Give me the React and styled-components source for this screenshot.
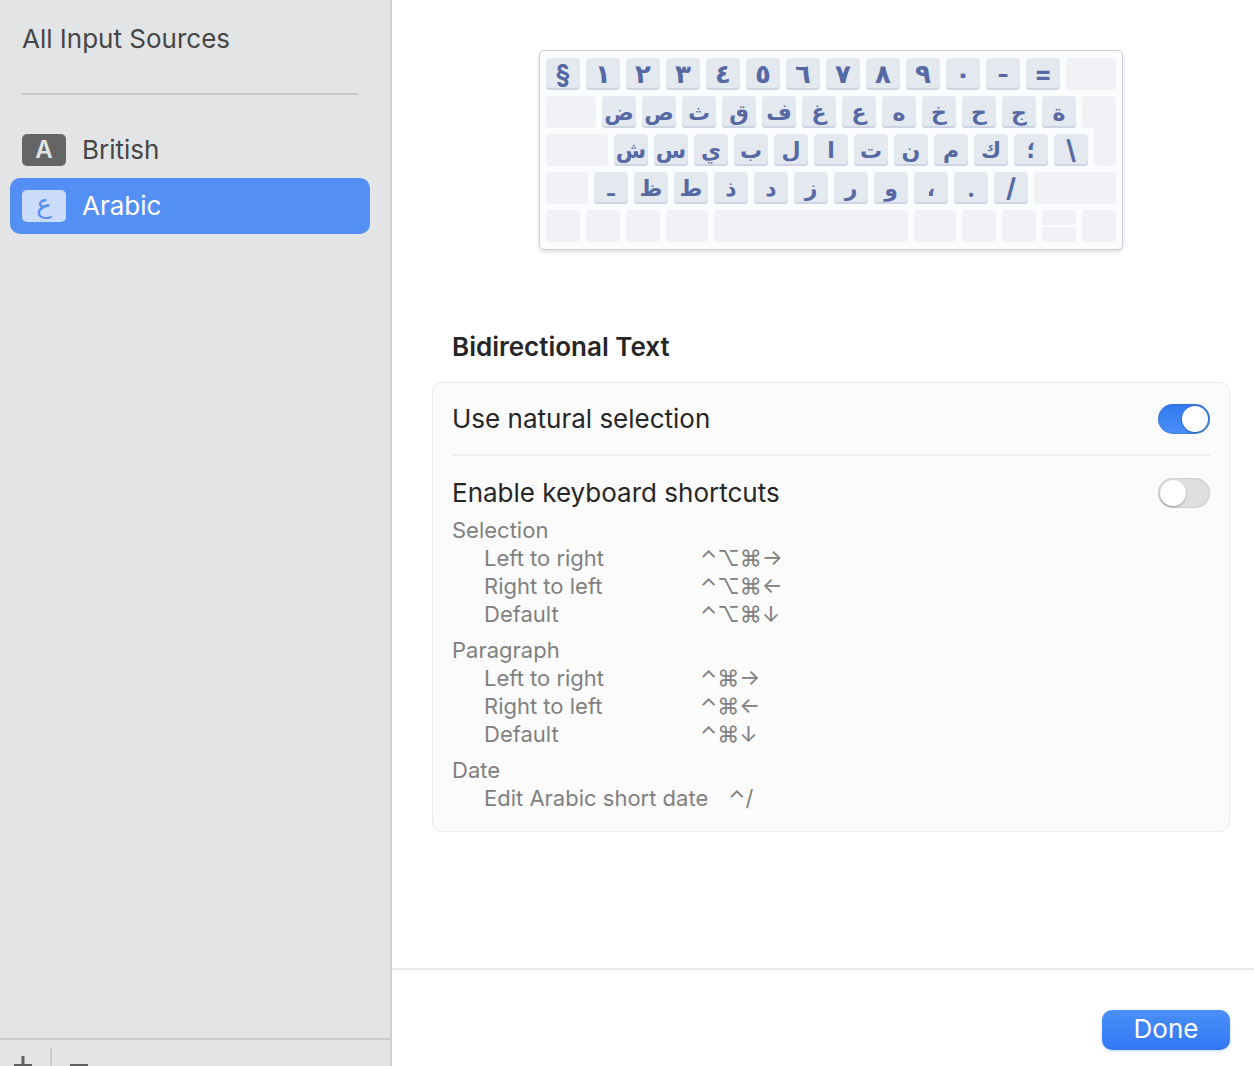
import { useState } from 'react';
import styled, { createGlobalStyle } from 'styled-components';

const sources = [
  { id: 'british', name: 'British', symbol: 'A' },
  { id: 'arabic', name: 'Arabic', symbol: 'ع' },
];

const digitRow = ['§', '١', '٢', '٣', '٤', '٥', '٦', '٧', '٨', '٩', '٠', '-', '='];
const topRow = ['ض', 'ص', 'ث', 'ق', 'ف', 'غ', 'ع', 'ه', 'خ', 'ح', 'ج', 'ة'];
const homeRow = ['ش', 'س', 'ي', 'ب', 'ل', 'ا', 'ت', 'ن', 'م', 'ك', '؛', '\\'];
const bottomRow = ['ـ', 'ظ', 'ط', 'ذ', 'د', 'ز', 'ر', 'و', '،', '.', '/'];

const shortcuts = [
  {
    title: 'Selection',
    items: [
      ['Left to right', '⌃⌥⌘→'],
      ['Right to left', '⌃⌥⌘←'],
      ['Default', '⌃⌥⌘↓'],
    ],
  },
  {
    title: 'Paragraph',
    items: [
      ['Left to right', '⌃⌘→'],
      ['Right to left', '⌃⌘←'],
      ['Default', '⌃⌘↓'],
    ],
  },
  {
    title: 'Date',
    items: [['Edit Arabic short date', '⌃/']],
  },
];

const isLarge = (char) => /[§=\-\\/.\u0660-\u0669]/.test(char);

const Keys = ({ chars }) =>
  chars.map((char) => (
    <Key key={char} $large={isLarge(char)}>
      {char}
    </Key>
  ));

const Keyboard = () => (
  <KeyboardFrame>
    <KeyRow>
      <Keys chars={digitRow} />
      <BlankKey $grow />
    </KeyRow>
    <KeyRow>
      <BlankKey $width={50} />
      <Keys chars={topRow} />
      <ReturnTop />
    </KeyRow>
    <KeyRow>
      <BlankKey $width={62} />
      <Keys chars={homeRow} />
      <ReturnBottom />
    </KeyRow>
    <KeyRow>
      <BlankKey $width={42} />
      <Keys chars={bottomRow} />
      <BlankKey $grow />
    </KeyRow>
    <KeyRow>
      <BlankKey />
      <BlankKey />
      <BlankKey />
      <BlankKey $width={42} />
      <BlankKey $grow />
      <BlankKey $width={42} />
      <BlankKey />
      <BlankKey />
      <ArrowPair>
        <HalfKey />
        <HalfKey />
      </ArrowPair>
      <BlankKey />
    </KeyRow>
  </KeyboardFrame>
);

const App = () => {
  const [selected, setSelected] = useState('arabic');
  const [natural, setNatural] = useState(true);
  const [enabled, setEnabled] = useState(false);

  return (
    <>
      <GlobalStyle />
      <Window>
        <Sidebar>
          <SidebarTitle>All Input Sources</SidebarTitle>
          <SourceList>
            {sources.map((source) => (
              <SourceButton
                key={source.id}
                type="button"
                $active={selected === source.id}
                onClick={() => setSelected(source.id)}
              >
                <Badge $active={selected === source.id}>{source.symbol}</Badge>
                {source.name}
              </SourceButton>
            ))}
          </SourceList>
          <SidebarFooter>
            <ToolButton type="button" aria-label="Add">
              <svg width="18" height="18" viewBox="0 0 18 18" stroke="currentColor" strokeWidth="3">
                <path d="M9 0v18M0 9.5h18" />
              </svg>
            </ToolButton>
            <ToolDivider />
            <ToolButton type="button" aria-label="Remove">
              <svg width="18" height="18" viewBox="0 0 18 18" stroke="currentColor" strokeWidth="3">
                <path d="M0 9.5h18" />
              </svg>
            </ToolButton>
          </SidebarFooter>
        </Sidebar>

        <Main>
          <Content>
            <Keyboard />
            <SectionTitle>Bidirectional Text</SectionTitle>
            <Card>
              <SettingRow>
                <label htmlFor="natural">Use natural selection</label>
                <Switch
                  id="natural"
                  type="checkbox"
                  checked={natural}
                  onChange={(e) => setNatural(e.target.checked)}
                />
              </SettingRow>
              <Divider />
              <SettingRow>
                <label htmlFor="shortcuts">Enable keyboard shortcuts</label>
                <Switch
                  id="shortcuts"
                  type="checkbox"
                  checked={enabled}
                  onChange={(e) => setEnabled(e.target.checked)}
                />
              </SettingRow>
              <Shortcuts>
                {shortcuts.map((group) => (
                  <div key={group.title}>
                    <div>{group.title}</div>
                    {group.items.map(([label, combo]) => (
                      <ShortcutRow key={label}>
                        <ShortcutLabel>{label}</ShortcutLabel>
                        <span>{combo}</span>
                      </ShortcutRow>
                    ))}
                  </div>
                ))}
              </Shortcuts>
            </Card>
          </Content>
          <Footer>
            <DoneButton type="button">Done</DoneButton>
          </Footer>
        </Main>
      </Window>
    </>
  );
};

const GlobalStyle = createGlobalStyle`
  * {
    box-sizing: border-box;
  }

  body {
    margin: 0;
    font-family: Inter, "DejaVu Sans", sans-serif;
    font-size: 26px;
    line-height: 32px;
    color: #262626;
    background: #fff;
  }

  button {
    border: 0;
    padding: 0;
    font: inherit;
    cursor: pointer;
  }
`;

const Window = styled.div`
  display: flex;
  height: 100vh;
  overflow: hidden;
`;

const Sidebar = styled.aside`
  display: flex;
  flex-direction: column;
  flex: 0 0 392px;
  background: #e3e4e6;
  border-right: 2px solid #cfd0d1;
  color: #464646;
`;

const SidebarTitle = styled.div`
  margin: 0 32px 0 22px;
  padding: 23px 0 38px;
  border-bottom: 2px solid #c9cacc;
`;

const SourceList = styled.div`
  flex: 1;
  padding: 27px 20px 0 10px;
`;

const SourceButton = styled.button`
  display: flex;
  align-items: center;
  gap: 16px;
  width: 100%;
  height: 56px;
  padding: 0 12px;
  border-radius: 10px;
  text-align: left;
  color: ${({ $active }) => ($active ? '#fff' : '#464646')};
  background: ${({ $active }) => ($active ? '#548ff5' : 'transparent')};
`;

const Badge = styled.span`
  display: flex;
  align-items: center;
  justify-content: center;
  width: 44px;
  height: 32px;
  border-radius: 5px;
  font-size: ${({ $active }) => ($active ? '26px' : '24px')};
  line-height: 28px;
  padding-bottom: ${({ $active }) => ($active ? '4px' : '0')};
  font-weight: ${({ $active }) => ($active ? 400 : 600)};
  color: ${({ $active }) => ($active ? '#548ff5' : '#e3e4e6')};
  background: ${({ $active }) => ($active ? '#cbdcfc' : '#646567')};
`;

const SidebarFooter = styled.div`
  display: flex;
  height: 28px;
  padding-top: 8px;
  border-top: 2px solid #c9cacc;
  overflow: hidden;
`;

const ToolButton = styled.button`
  display: flex;
  height: 36px;
  padding: 8px 18px 0 14px;
  color: #5f6062;
  background: transparent;
`;

const ToolDivider = styled.div`
  width: 2px;
  height: 36px;
  margin-right: 4px;
  background: #c9cacc;
`;

const Main = styled.main`
  display: flex;
  flex: 1;
  flex-direction: column;
  min-width: 0;
`;

const Content = styled.div`
  flex: 1;
  min-height: 0;
  padding: 50px 24px 0 40px;
`;

const KeyboardFrame = styled.div`
  display: flex;
  flex-direction: column;
  gap: 6px;
  width: 584px;
  margin: 0 auto;
  padding: 7px 6px;
  border: 1px solid #cdd1d6;
  border-radius: 5px;
  background: #fbfcfe;
  box-shadow: 0 2px 4px rgba(0, 0, 0, 0.14);
`;

const KeyRow = styled.div`
  display: flex;
  gap: 6px;
  height: 32px;
`;

const Key = styled.div`
  display: flex;
  align-items: center;
  justify-content: center;
  width: 34px;
  border-radius: 4px;
  font-size: ${({ $large }) => ($large ? '26px' : '22px')};
  font-weight: 700;
  line-height: 30px;
  color: #5769a3;
  background: #e4e9f0;
  box-shadow: inset 0 -2px 0 #cdd4e3;
`;

const BlankKey = styled.div`
  flex: ${({ $grow, $width = 34 }) => ($grow ? '1' : `0 0 ${$width}px`)};
  border-radius: 4px;
  background: #f1f2f6;
`;

/* The return key is an L shape, its lower half reaches up to meet the upper one */
const ReturnTop = styled(BlankKey)`
  border-radius: 4px 4px 0 4px;
`;

const ReturnBottom = styled(BlankKey)`
  flex: 1;
  margin-top: -6px;
  border-radius: 0 0 4px 4px;
`;

const ArrowPair = styled.div`
  display: flex;
  flex-direction: column;
  gap: 2px;
  width: 34px;
`;

const HalfKey = styled.div`
  flex: 1;
  border-radius: 2px;
  background: #f1f2f6;
`;

const SectionTitle = styled.h2`
  margin: 81px 20px 19px;
  font-size: 26px;
  font-weight: 600;
`;

const Card = styled.section`
  padding: 0 19px 19px;
  border: 1px solid #ebebeb;
  border-radius: 10px;
  background: #fbfbfb;
`;

const SettingRow = styled.div`
  display: flex;
  align-items: center;
  justify-content: space-between;
  padding: 20px 0 19px;
`;

const Divider = styled.div`
  height: 2px;
  margin-bottom: 1px;
  background: #ededed;
`;

const Switch = styled.input`
  appearance: none;
  width: 52px;
  height: 30px;
  margin: 0;
  padding: 2px;
  border-radius: 15px;
  background: ${({ checked }) => (checked ? 'linear-gradient(#3478f0, #4a8ff8)' : '#dfdfdf')};
  box-shadow: inset 0 0 2px rgba(0, 0, 0, 0.25);
  cursor: pointer;

  &::before {
    content: '';
    display: block;
    width: 26px;
    height: 26px;
    margin-left: ${({ checked }) => (checked ? '22px' : '0')};
    border-radius: 50%;
    background: #fff;
    box-shadow: 0 1px 2px rgba(0, 0, 0, 0.3);
  }
`;

const Shortcuts = styled.div`
  display: flex;
  flex-direction: column;
  gap: 8px;
  margin-top: -12px;
  font-size: 22px;
  line-height: 28px;
  color: #808080;
`;

const ShortcutRow = styled.div`
  display: flex;
  padding-left: 32px;
`;

const ShortcutLabel = styled.span`
  min-width: 216px;
  padding-right: 20px;
`;

const Footer = styled.footer`
  display: flex;
  justify-content: flex-end;
  padding: 40px 24px 16px;
  border-top: 2px solid #e5e5e5;
`;

const DoneButton = styled.button`
  width: 128px;
  height: 40px;
  padding-bottom: 2px;
  border-radius: 10px;
  color: #fff;
  background: linear-gradient(#4a8ff8, #3377f6);
  box-shadow: 0 1px 3px rgba(51, 119, 246, 0.3);
`;

export default App;
